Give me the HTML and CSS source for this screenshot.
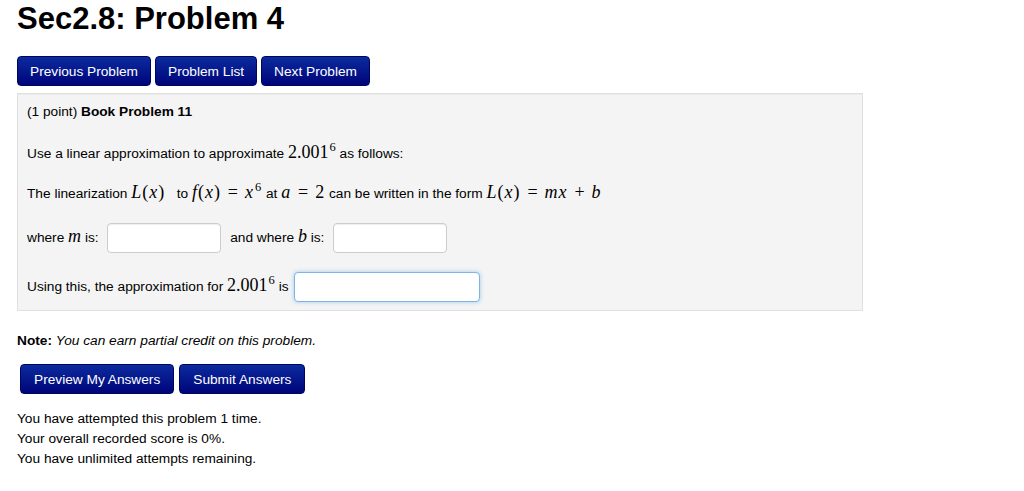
FILE: index.html
```html
<!DOCTYPE html>
<html lang="en">
<head>
    <meta charset="UTF-8">
    <title>Sec2.8: Problem 4</title>
    <link rel="stylesheet" href="styles.css">
</head>
<body>

<div class="page">
    <h1 class="page-title">Sec2.8: Problem 4</h1>

    <div class="nav-buttons">
        <button class="blue-button">Previous Problem</button>
        <button class="blue-button">Problem List</button>
        <button class="blue-button">Next Problem</button>
    </div>

    <div class="problem-box">
        <p class="row first">(1 point) <b>Book Problem 11</b></p>

        <p class="row">Use a linear approximation to approximate <span class="math">2.001<sup>6</sup></span> as follows:</p>

        <p class="row">The linearization <span class="math spaced"><i>L</i>(<i>x</i>)</span>&nbsp;&nbsp; to <span class="math spaced"><i>f</i>(<i>x</i>)<span class="op">=</span><i>x</i><sup>6</sup></span> at <span class="math spaced"><i>a</i><span class="op">=</span>2</span> can be written in the form <span class="math spaced"><i>L</i>(<i>x</i>)<span class="op">=</span><i>mx</i><span class="op">+</span><i>b</i></span></p>

        <p class="row input-row">where <span class="math"><i>m</i></span> is: <input type="text" class="answer short"> and where <span class="math"><i>b</i></span> is: <input type="text" class="answer short"></p>

        <p class="row input-row last">Using this, the approximation for <span class="math">2.001<sup>6</sup></span> is <input type="text" class="answer long focused"></p>
    </div>

    <p class="note"><b>Note:</b> <i>You can earn partial credit on this problem.</i></p>

    <div class="submit-buttons">
        <button class="blue-button wide">Preview My Answers</button>
        <button class="blue-button wide">Submit Answers</button>
    </div>

    <div class="status">
        You have attempted this problem 1 time.<br>
        Your overall recorded score is 0%.<br>
        You have unlimited attempts remaining.
    </div>
</div>

</body>
</html>
```

FILE: styles.css
```css
body {
    margin: 0;
    font-family: 'Liberation Sans', Arial, sans-serif;
    font-size: 13.7px;
    color: #000000;
    background: #ffffff;
}

.page {
    padding: 0 17px;
}

.page-title {
    font-size: 31px;
    line-height: 33px;
    font-weight: bold;
    margin: 2px 0 0;
}

.nav-buttons {
    display: flex;
    gap: 4px;
    margin-top: 21px;
}

.blue-button {
    height: 30px;
    padding: 0 12px;
    font-family: 'Liberation Sans', Arial, sans-serif;
    font-size: 13.7px;
    color: #ffffff;
    background: linear-gradient(#0b2b9e, #00047a);
    border: 1px solid #00065e;
    border-radius: 4px;
    cursor: pointer;
}

.blue-button.wide {
    padding: 0 13px;
}

.problem-box {
    margin-top: 7px;
    width: 826px;
    padding: 8px 9px;
    background-color: #f4f4f4;
    border: 1px solid #e0e0e0;
    box-shadow: inset 0 1px 1px rgba(0, 0, 0, 0.04);
}

.row {
    margin: 0 0 20px;
    height: 20px;
    line-height: 20px;
    white-space: nowrap;
}

.row.first {
    margin-bottom: 21px;
}

.input-row {
    height: 30px;
    line-height: 30px;
    margin-bottom: 19px;
}

.input-row.last {
    margin-bottom: 0;
}

.math {
    font-family: 'Liberation Serif', 'Times New Roman', serif;
    font-size: 18px;
    line-height: 1;
}

.math.spaced {
    letter-spacing: 1px;
}

.math sup {
    font-size: 12.5px;
    line-height: 0;
    vertical-align: 7px;
    margin-left: 1px;
}

.op {
    display: inline-block;
    width: 14px;
    margin: 0 5px;
    text-align: center;
    letter-spacing: 0;
}

.answer {
    height: 30px;
    box-sizing: border-box;
    margin: 0 5px;
    vertical-align: middle;
    border: 1px solid #cccccc;
    border-radius: 4px;
    background: #ffffff;
    box-shadow: inset 0 1px 1px rgba(0, 0, 0, 0.07);
}

.short {
    width: 114px;
}

.long {
    width: 186px;
    margin-left: 2px;
}

.focused {
    border-color: #7db5ea;
    box-shadow: 0 0 4px rgba(102, 175, 233, 0.6);
}

.note {
    margin: 20px 0 0;
    line-height: 20px;
}

.submit-buttons {
    display: flex;
    gap: 5px;
    margin: 13px 0 0 3px;
}

.status {
    margin-top: 15px;
    line-height: 20px;
}
```
